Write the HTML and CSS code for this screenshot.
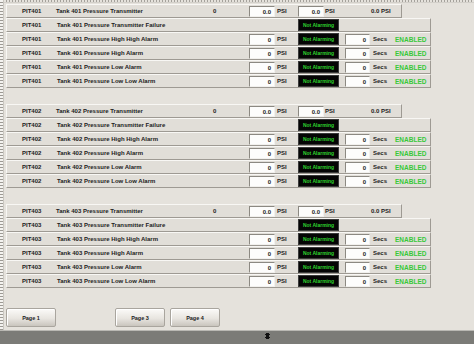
FILE: index.html
```html
<!DOCTYPE html>
<html lang="en">
<head>
    <meta charset="UTF-8">
    <title>Tank Pressure Alarms</title>
    <link rel="stylesheet" href="styles.css">
</head>
<body>
    <div class="screen">
        <div class="vruler"></div>
        <div class="main">
            <div class="hruler"></div>

            <div class="group">
                <div class="row head">
                    <div class="c-tag">PIT401</div>
                    <div class="c-desc">Tank 401 Pressure Transmitter</div>
                    <div class="c-raw">0</div>
                    <div class="box">0.0</div><div class="unit">PSI</div>
                    <div class="box">0.0</div><div class="unit wide">PSI</div>
                    <div class="c-eng">0.0 PSI</div>
                </div>
                <div class="row">
                    <div class="c-tag">PIT401</div>
                    <div class="c-desc long">Tank 401 Pressure Transmitter Failure</div>
                    <div class="spacer"></div>
                    <div class="alarm">Not Alarming</div>
                </div>
                <div class="row">
                    <div class="c-tag">PIT401</div>
                    <div class="c-desc long">Tank 401 Pressure High High Alarm</div>
                    <div class="box">0</div><div class="unit">PSI</div>
                    <div class="alarm">Not Alarming</div>
                    <div class="box secs">0</div><div class="unit s">Secs</div>
                    <div class="enabled">ENABLED</div>
                </div>
                <div class="row">
                    <div class="c-tag">PIT401</div>
                    <div class="c-desc long">Tank 401 Pressure High Alarm</div>
                    <div class="box">0</div><div class="unit">PSI</div>
                    <div class="alarm">Not Alarming</div>
                    <div class="box secs">0</div><div class="unit s">Secs</div>
                    <div class="enabled">ENABLED</div>
                </div>
                <div class="row">
                    <div class="c-tag">PIT401</div>
                    <div class="c-desc long">Tank 401 Pressure Low Alarm</div>
                    <div class="box">0</div><div class="unit">PSI</div>
                    <div class="alarm">Not Alarming</div>
                    <div class="box secs">0</div><div class="unit s">Secs</div>
                    <div class="enabled">ENABLED</div>
                </div>
                <div class="row">
                    <div class="c-tag">PIT401</div>
                    <div class="c-desc long">Tank 401 Pressure Low Low Alarm</div>
                    <div class="box">0</div><div class="unit">PSI</div>
                    <div class="alarm">Not Alarming</div>
                    <div class="box secs">0</div><div class="unit s">Secs</div>
                    <div class="enabled">ENABLED</div>
                </div>
            </div>

            <div class="group">
                <div class="row head">
                    <div class="c-tag">PIT402</div>
                    <div class="c-desc">Tank 402 Pressure Transmitter</div>
                    <div class="c-raw">0</div>
                    <div class="box">0.0</div><div class="unit">PSI</div>
                    <div class="box">0.0</div><div class="unit wide">PSI</div>
                    <div class="c-eng">0.0 PSI</div>
                </div>
                <div class="row">
                    <div class="c-tag">PIT402</div>
                    <div class="c-desc long">Tank 402 Pressure Transmitter Failure</div>
                    <div class="spacer"></div>
                    <div class="alarm">Not Alarming</div>
                </div>
                <div class="row">
                    <div class="c-tag">PIT402</div>
                    <div class="c-desc long">Tank 402 Pressure High High Alarm</div>
                    <div class="box">0</div><div class="unit">PSI</div>
                    <div class="alarm">Not Alarming</div>
                    <div class="box secs">0</div><div class="unit s">Secs</div>
                    <div class="enabled">ENABLED</div>
                </div>
                <div class="row">
                    <div class="c-tag">PIT402</div>
                    <div class="c-desc long">Tank 402 Pressure High Alarm</div>
                    <div class="box">0</div><div class="unit">PSI</div>
                    <div class="alarm">Not Alarming</div>
                    <div class="box secs">0</div><div class="unit s">Secs</div>
                    <div class="enabled">ENABLED</div>
                </div>
                <div class="row">
                    <div class="c-tag">PIT402</div>
                    <div class="c-desc long">Tank 402 Pressure Low Alarm</div>
                    <div class="box">0</div><div class="unit">PSI</div>
                    <div class="alarm">Not Alarming</div>
                    <div class="box secs">0</div><div class="unit s">Secs</div>
                    <div class="enabled">ENABLED</div>
                </div>
                <div class="row">
                    <div class="c-tag">PIT402</div>
                    <div class="c-desc long">Tank 402 Pressure Low Low Alarm</div>
                    <div class="box">0</div><div class="unit">PSI</div>
                    <div class="alarm">Not Alarming</div>
                    <div class="box secs">0</div><div class="unit s">Secs</div>
                    <div class="enabled">ENABLED</div>
                </div>
            </div>

            <div class="group">
                <div class="row head">
                    <div class="c-tag">PIT403</div>
                    <div class="c-desc">Tank 403 Pressure Transmitter</div>
                    <div class="c-raw">0</div>
                    <div class="box">0.0</div><div class="unit">PSI</div>
                    <div class="box">0.0</div><div class="unit wide">PSI</div>
                    <div class="c-eng">0.0 PSI</div>
                </div>
                <div class="row">
                    <div class="c-tag">PIT403</div>
                    <div class="c-desc long">Tank 403 Pressure Transmitter Failure</div>
                    <div class="spacer"></div>
                    <div class="alarm">Not Alarming</div>
                </div>
                <div class="row">
                    <div class="c-tag">PIT403</div>
                    <div class="c-desc long">Tank 403 Pressure High High Alarm</div>
                    <div class="box">0</div><div class="unit">PSI</div>
                    <div class="alarm">Not Alarming</div>
                    <div class="box secs">0</div><div class="unit s">Secs</div>
                    <div class="enabled">ENABLED</div>
                </div>
                <div class="row">
                    <div class="c-tag">PIT403</div>
                    <div class="c-desc long">Tank 403 Pressure High Alarm</div>
                    <div class="box">0</div><div class="unit">PSI</div>
                    <div class="alarm">Not Alarming</div>
                    <div class="box secs">0</div><div class="unit s">Secs</div>
                    <div class="enabled">ENABLED</div>
                </div>
                <div class="row">
                    <div class="c-tag">PIT403</div>
                    <div class="c-desc long">Tank 403 Pressure Low Alarm</div>
                    <div class="box">0</div><div class="unit">PSI</div>
                    <div class="alarm">Not Alarming</div>
                    <div class="box secs">0</div><div class="unit s">Secs</div>
                    <div class="enabled">ENABLED</div>
                </div>
                <div class="row">
                    <div class="c-tag">PIT403</div>
                    <div class="c-desc long">Tank 403 Pressure Low Low Alarm</div>
                    <div class="box">0</div><div class="unit">PSI</div>
                    <div class="alarm">Not Alarming</div>
                    <div class="box secs">0</div><div class="unit s">Secs</div>
                    <div class="enabled">ENABLED</div>
                </div>
            </div>

            <div class="nav">
                <button class="page-btn">Page 1</button>
                <button class="page-btn gap">Page 3</button>
                <button class="page-btn">Page 4</button>
            </div>
        </div>
    </div>
    <div class="status">
        <svg class="bug" width="5" height="6" viewBox="0 0 5 6">
            <rect x="1" y="0" width="3" height="6" fill="#111"/>
            <rect x="0" y="1" width="5" height="1" fill="#111"/>
            <rect x="0" y="4" width="5" height="1" fill="#111"/>
        </svg>
    </div>
</body>
</html>
```

FILE: styles.css
```css
* {
    margin: 0;
    padding: 0;
    box-sizing: border-box;
}

body {
    width: 474px;
    height: 344px;
    overflow: hidden;
    background: #e5e2dc;
    font-family: 'Liberation Sans', Arial, sans-serif;
    font-weight: bold;
    font-size: 6px;
    color: #1c1c1c;
}

.screen {
    display: flex;
    height: 330px;
}

/* dashed design rulers on the left and top edge */
.vruler {
    width: 4px;
    flex-shrink: 0;
    background:
        repeating-linear-gradient(to bottom, #f4f3f0 0, #f4f3f0 2px, #9d9a94 2px, #9d9a94 3px);
    border-right: 1px solid #c9c6c0;
}

.main {
    flex: 1;
    padding-left: 2px;
    display: flex;
    flex-direction: column;
}

.hruler {
    height: 3px;
    margin-left: -2px;
    background:
        repeating-linear-gradient(to right, #e5e2dc 0, #e5e2dc 2px, #a4a19b 2px, #a4a19b 3px);
    border-bottom: 1px solid #d3d0ca;
    margin-bottom: 1px;
}

.group {
    display: flex;
    flex-direction: column;
    margin-bottom: 16px;
}

.row {
    display: flex;
    align-items: center;
    width: 425px;
    height: 14px;
    background: #e1ded8;
    border: 1px solid;
    border-color: #f8f7f4 #9e9a93 #9e9a93 #f8f7f4;
    white-space: nowrap;
}

.row.head {
    width: 396px;
}

.c-tag {
    width: 49px;
    padding-left: 15px;
}

.c-desc {
    width: 156px;
}

.c-desc.long {
    width: 193px;
    padding-left: 1px;
}

.c-raw {
    width: 37px;
    padding-left: 1px;
}

.box {
    width: 26px;
    height: 11px;
    line-height: 10px;
    background: #fdfdfc;
    border: 1px solid;
    border-color: #8c8982 #f2f1ee #f2f1ee #8c8982;
    text-align: right;
    padding-right: 3px;
}

.box.secs {
    width: 25px;
}

.unit {
    width: 23px;
    padding-left: 2px;
}

.unit.wide {
    width: 47px;
    padding-left: 1px;
}

.unit.s {
    width: 25px;
    padding-left: 3px;
}

.spacer {
    width: 49px;
}

.alarm {
    width: 41px;
    height: 12px;
    margin-right: 6px;
    background: #050505;
    border: 1px solid #3a3a3a;
    color: #2fd52f;
    font-size: 5px;
    line-height: 10px;
    text-align: center;
}

.enabled {
    color: #38c838;
    font-size: 6.5px;
}

.nav {
    display: flex;
    margin-top: 4px;
}

.page-btn {
    width: 50px;
    height: 19px;
    font-family: 'Liberation Sans', Arial, sans-serif;
    font-weight: bold;
    font-size: 5.5px;
    color: #1c1c1c;
    background: linear-gradient(to bottom, #fbfaf8 0%, #e8e5e0 55%, #c9c5be 100%);
    border: 1px solid #a9a59e;
    border-radius: 2px;
    box-shadow: inset 1px 1px 0 #ffffff;
    margin-right: 5px;
}

.page-btn.gap {
    margin-left: 54px;
}

.status {
    height: 14px;
    background: #7b7b77;
    border-top: 1px solid #b9b8b3;
    padding-left: 265px;
    padding-top: 2px;
}

.bug {
    display: block;
}
```
